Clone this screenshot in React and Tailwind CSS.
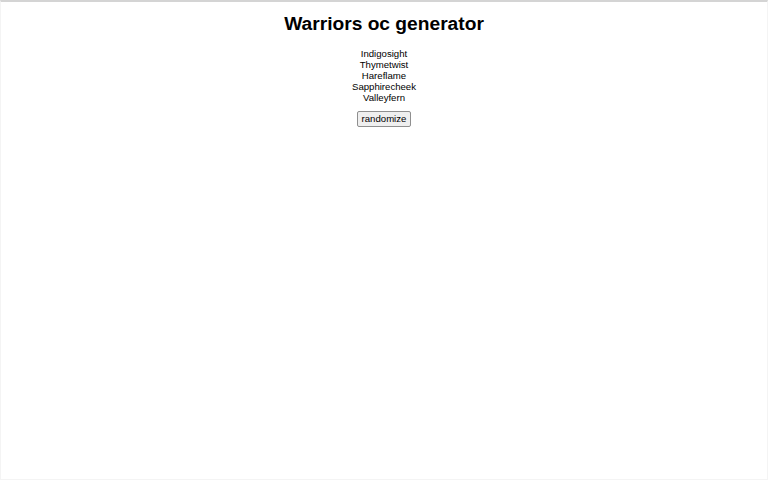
export default function App() {
  const names = ["Indigosight", "Thymetwist", "Hareflame", "Sapphirecheek", "Valleyfern"];
  return (
    <div
      className="h-[480px] w-full border-t-2 border-t-[#d4d4d4] border-x border-b border-x-[#f4f4f4] border-b-[#f4f4f4] bg-white text-black flex flex-col items-center"
      style={{ fontFamily: '"Liberation Sans", Arial, sans-serif' }}
    >
      <h1 className="mt-[11px] text-[19.2px] leading-[22px] font-bold">Warriors oc generator</h1>
      <div className="mt-[13px] flex flex-col items-center text-[9.6px] leading-[11px]">
        {names.map((n) => (
          <div key={n}>{n}</div>
        ))}
      </div>
      <button className="mt-[8px] h-[16px] px-[4px] text-[9.6px] leading-[12px] border border-[#8f8f8f] rounded-[2px] bg-[#efefef]">
        randomize
      </button>
    </div>
  );
}
